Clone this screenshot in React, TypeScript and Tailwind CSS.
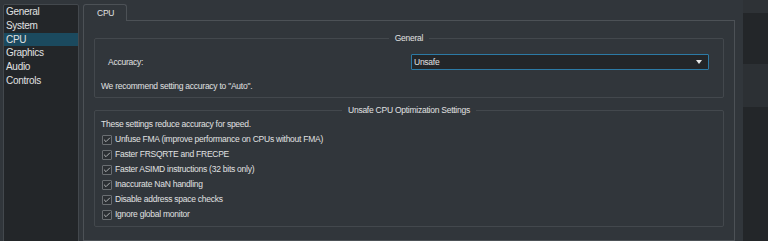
import { Check } from "lucide-react";

const sections = ["General", "System", "CPU", "Graphics", "Audio", "Controls"];

const unsafeOptions = [
  "Unfuse FMA (improve performance on CPUs without FMA)",
  "Faster FRSQRTE and FRECPE",
  "Faster ASIMD instructions (32 bits only)",
  "Inaccurate NaN handling",
  "Disable address space checks",
  "Ignore global monitor",
];

function CheckRow({ label }: { label: string }) {
  return (
    <label className="flex h-[15px] items-center gap-[3px] pl-[7px]">
      <span className="flex h-[10px] w-[10px] items-center justify-center rounded-[1px] border border-[#6a6e72] bg-[#2c3034]">
        <Check size={8} strokeWidth={2.5} className="text-[#c8cacc]" />
      </span>
      <span>{label}</span>
    </label>
  );
}

export default function App() {
  return (
    <div
      className="flex h-[241px] w-[768px] overflow-hidden bg-[#31363b] text-[8.5px] tracking-[-0.25px] text-[#e0e1e2]"
      style={{ fontFamily: '"Liberation Sans", Arial, sans-serif' }}
    >
      {/* page list */}
      <div className="ml-[3px] mt-[4px] h-[260px] w-[76px] shrink-0 rounded-[2px] border border-[#43484d] bg-[#232629] text-[10px] tracking-[-0.3px]">
        {sections.map((s) => (
          <div
            key={s}
            className={`h-[13.75px] pl-[2px] leading-[13.75px] ${s === "CPU" ? "bg-[#1b4a5f]" : ""}`}
          >
            {s}
          </div>
        ))}
      </div>

      {/* tab widget */}
      <div className="ml-[4px] mt-[4px] flex w-[652px] shrink-0 flex-col">
        <div className="flex">
          <div className="relative z-10 -mb-px h-[17px] w-[44px] rounded-t-[3px] border border-b-0 border-[#4c5156] bg-[#31363b] pl-[13px] leading-[16px]">
            CPU
          </div>
        </div>
        <div className="h-[240px] border border-[#4c5156] px-[10px] pt-[10px]">
          <fieldset className="h-[67px] rounded-[2px] border border-[#43484d]">
            <legend className="mx-auto px-[6px] leading-[14px]">General</legend>
            <div className="flex items-center pl-[13px] pr-[14px] pt-[9px]">
              <span className="flex-1">Accuracy:</span>
              <div className="flex h-[16px] w-[298px] items-center justify-between rounded-[1px] border border-[#2c7aa5] bg-[#232629] pl-[2px] pr-[6px]">
                <span>Unsafe</span>
                <svg width="6" height="4" viewBox="0 0 6 4">
                  <path d="M0 0h6L3 4z" fill="#e8e8e8" />
                </svg>
              </div>
            </div>
            <p className="mt-[9px] pl-[6px] leading-[14px]">
              We recommend setting accuracy to "Auto".
            </p>
          </fieldset>

          <fieldset className="mt-[5px] rounded-[2px] border border-[#43484d] pb-[4px]">
            <legend className="mx-auto px-[6px] leading-[14px]">
              Unsafe CPU Optimization Settings
            </legend>
            <p className="pl-[6px] leading-[15px]">These settings reduce accuracy for speed.</p>
            {unsafeOptions.map((o) => (
              <CheckRow key={o} label={o} />
            ))}
          </fieldset>
        </div>
      </div>

      {/* window behind */}
      <div className="ml-[8px] flex flex-1 flex-col">
        <div className="h-[13px] bg-[#2e3236]" />
        <div className="h-[51px] bg-[#232629]" />
        <div className="h-[43px] bg-[#2c3034]" />
        <div className="flex-1 bg-[#232629]" />
      </div>
    </div>
  );
}
